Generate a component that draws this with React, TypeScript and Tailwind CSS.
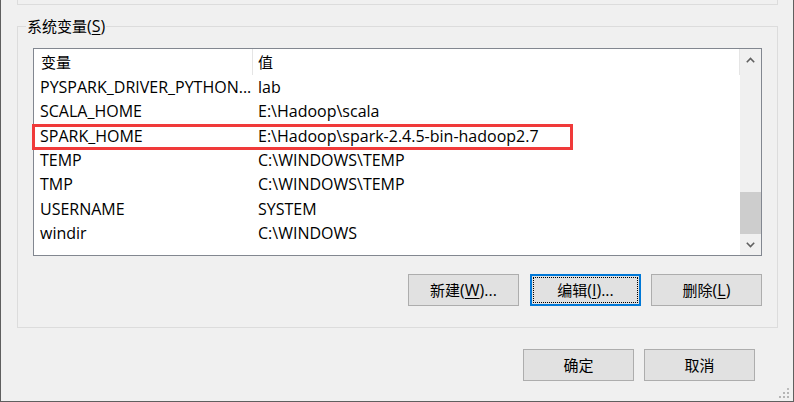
import type { ReactNode } from "react";

const rows: [string, string][] = [
  ["PYSPARK_DRIVER_PYTHON...", "lab"],
  ["SCALA_HOME", "E:\\Hadoop\\scala"],
  ["SPARK_HOME", "E:\\Hadoop\\spark-2.4.5-bin-hadoop2.7"],
  ["TEMP", "C:\\WINDOWS\\TEMP"],
  ["TMP", "C:\\WINDOWS\\TEMP"],
  ["USERNAME", "SYSTEM"],
  ["windir", "C:\\WINDOWS"],
];

function Zh({ children }: { children: ReactNode }) {
  return <span className="text-[15px]">{children}</span>;
}

function Chevron({ down }: { down?: boolean }) {
  return (
    <svg width="9" height="6" viewBox="0 0 9 6" className={down ? "rotate-180" : ""}>
      <path d="M0.8 5.2 L4.5 1.5 L8.2 5.2" fill="none" stroke="#606060" strokeWidth="1.6" />
    </svg>
  );
}

function WinButton({ children, focused }: { children: ReactNode; focused?: boolean }) {
  return (
    <div
      className={
        focused
          ? "w-[111px] h-[32px] bg-[#e1e1e1] border-2 border-[#0078d7] p-px flex"
          : "w-[111px] h-[32px] bg-[#e1e1e1] border border-[#adadad] flex items-center justify-center"
      }
    >
      {focused ? (
        <div className="flex-1 border border-dotted border-black flex items-center justify-center">
          {children}
        </div>
      ) : (
        children
      )}
    </div>
  );
}

export default function App() {
  return (
    <div className="relative w-[794px] h-[402px] overflow-hidden bg-[#f0f0f0] border-x border-b border-[#5f5f5f] font-['Open_Sans','Noto_Sans_CJK_SC',sans-serif] text-[16px] text-black leading-[20px]">
      {/* bottom of the user variables group */}
      <div className="ml-[16px] mr-[15px] h-[5px] border-x border-b border-[#dcdcdc]" />

      {/* system variables group */}
      <div className="relative ml-[16px] mr-[15px] mt-[21px] border border-[#dcdcdc] pt-[21px] pb-[21px] px-[15px]">
        <span className="absolute left-[8px] top-[-11px] px-px bg-[#f0f0f0] whitespace-nowrap">
          <Zh>系统变量</Zh>(<span className="underline underline-offset-2">S</span>)
        </span>

        <div className="flex h-[208px] border border-[#828790] bg-white">
          <div className="flex-1 flex flex-col">
            <div className="flex h-[26px] shrink-0">
              <div className="w-[219px] border-r border-[#e5e5e5] pl-[7px] flex items-center">
                <Zh>变量</Zh>
              </div>
              <div className="flex-1 border-r border-[#e5e5e5] pl-[5px] flex items-center">
                <Zh>值</Zh>
              </div>
            </div>
            {rows.map(([name, value]) => (
              <div key={name} className="relative flex h-[24.33px] shrink-0 items-center whitespace-nowrap">
                <div className="w-[219px] pl-[6px] overflow-hidden">{name}</div>
                <div className="flex-1 pl-[5px]">{value}</div>
                {name === "SPARK_HOME" && (
                  <div className="absolute left-[-2px] top-0 w-[541px] h-[26px] border-[3px] border-[#f03a3a]" />
                )}
              </div>
            ))}
          </div>

          <div className="w-[21px] bg-[#f0f0f0] flex flex-col">
            <div className="h-[21px] flex items-center justify-center">
              <Chevron />
            </div>
            <div className="flex-1 flex flex-col justify-end">
              <div className="h-[42px] bg-[#cdcdcd]" />
            </div>
            <div className="h-[21px] flex items-center justify-center">
              <Chevron down />
            </div>
          </div>
        </div>

        <div className="mt-[18px] flex justify-end gap-[10px]">
          <div className="mr-px">
            <WinButton>
              <Zh>新建</Zh>(<span className="underline underline-offset-2">W</span>)...
            </WinButton>
          </div>
          <WinButton focused>
            <Zh>编辑</Zh>(<span className="underline underline-offset-2">I</span>)...
          </WinButton>
          <WinButton>
            <Zh>删除</Zh>(<span className="underline underline-offset-2">L</span>)
          </WinButton>
        </div>
      </div>

      <div className="mt-[21px] pr-[38px] flex justify-end gap-[10px]">
        <WinButton>
          <Zh>确定</Zh>
        </WinButton>
        <WinButton>
          <Zh>取消</Zh>
        </WinButton>
      </div>

      {/* taskbar edge showing under the window */}
      <div className="absolute bottom-[-1px] left-[136px] w-[91px] h-px bg-[#1e1e1e]" />

      {/* size grip */}
      <svg width="10" height="10" viewBox="0 0 10 10" className="absolute right-[4px] bottom-[3px]">
        <rect x="8" y="0" width="2" height="2" fill="#bdbdbd" />
        <rect x="4" y="4" width="2" height="2" fill="#b5b5b5" />
        <rect x="8" y="4" width="2" height="2" fill="#b5b5b5" />
        <rect x="0" y="8" width="2" height="2" fill="#b5b5b5" />
        <rect x="4" y="8" width="2" height="2" fill="#b5b5b5" />
        <rect x="8" y="8" width="2" height="2" fill="#b5b5b5" />
      </svg>
    </div>
  );
}
